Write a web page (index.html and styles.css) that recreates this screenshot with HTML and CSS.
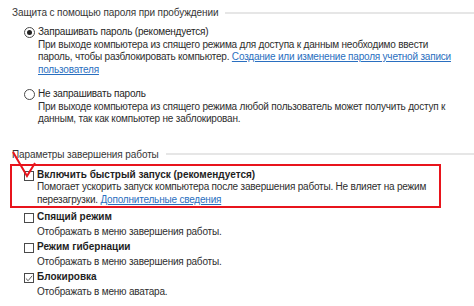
FILE: index.html
```html
<!DOCTYPE html>
<html lang="ru">

<head>
    <meta charset="UTF-8">
    <title>Параметры электропитания</title>
    <link rel="stylesheet" href="styles.css">
</head>

<body>
    <div class="panel">
        <div class="group">
            <div class="group-title">Защита с помощью пароля при пробуждении</div>

            <div class="option">
                <span class="radio checked"></span>
                <div class="option-body">
                    <div class="label">Запрашивать пароль (рекомендуется)</div>
                    <div class="desc">При выходе компьютера из спящего режима для доступа к данным необходимо ввести<br>
                        пароль, чтобы разблокировать компьютер. <a href="#">Создание или изменение пароля учетной записи<br>
                        пользователя</a></div>
                </div>
            </div>

            <div class="option option-gap">
                <span class="radio"></span>
                <div class="option-body">
                    <div class="label">Не запрашивать пароль</div>
                    <div class="desc">При выходе компьютера из спящего режима любой пользователь может получить доступ к<br>
                        данным, так как компьютер не заблокирован.</div>
                </div>
            </div>
        </div>

        <div class="group group-shutdown">
            <div class="group-title">Параметры завершения работы</div>

            <div class="highlight">
                <svg class="mark" width="26" height="30" viewBox="0 0 26 30">
                    <path d="M1 1 L15 25 L23 12" fill="none" stroke="#e8141c" stroke-width="2" />
                </svg>
                <div class="option">
                    <span class="box"></span>
                    <div class="option-body">
                        <div class="label bold">Включить быстрый запуск (рекомендуется)</div>
                        <div class="desc">Помогает ускорить запуск компьютера после завершения работы. Не влияет на режим<br>
                            перезагрузки. <a href="#">Дополнительные сведения</a></div>
                    </div>
                </div>
            </div>

            <div class="option check-item first-item">
                <span class="box"></span>
                <div class="option-body">
                    <div class="label bold">Спящий режим</div>
                    <div class="desc">Отображать в меню завершения работы.</div>
                </div>
            </div>

            <div class="option check-item">
                <span class="box"></span>
                <div class="option-body">
                    <div class="label bold">Режим гибернации</div>
                    <div class="desc">Отображать в меню завершения работы.</div>
                </div>
            </div>

            <div class="option check-item">
                <span class="box">
                    <svg width="9" height="9" viewBox="0 0 9 9">
                        <path d="M1 4.5 L3.5 7 L8 1.5" fill="none" stroke="#444" stroke-width="1" />
                    </svg>
                </span>
                <div class="option-body">
                    <div class="label bold">Блокировка</div>
                    <div class="desc">Отображать в меню аватара.</div>
                </div>
            </div>
        </div>
    </div>
</body>

</html>
```

FILE: styles.css
```css
body {
    margin: 0;
    background: #fff;
    font-family: 'Liberation Sans', Arial, sans-serif;
    font-size: 10px;
    letter-spacing: -0.2px;
    color: #2e2e2e;
}

.panel {
    padding: 6px 0 0 12px;
}

.group-title {
    display: flex;
    align-items: center;
    gap: 7px;
    line-height: 13px;
    letter-spacing: -0.1px;
    color: #363636;
}

.group-title::after {
    content: "";
    flex: 1;
    height: 2px;
    background: #e6e6e6;
}

.option {
    display: flex;
    align-items: flex-start;
    gap: 3px;
    margin-left: 12px;
    margin-top: 7px;
    line-height: 12.5px;
}

.option-gap {
    margin-top: 12px;
}

.option-body {
    white-space: nowrap;
}

.label {
    color: #262626;
}

.bold {
    font-weight: bold;
    letter-spacing: 0;
    color: #1e1e1e;
}

.desc a {
    color: #2a6fc0;
}

.radio {
    flex: none;
    box-sizing: border-box;
    width: 11px;
    height: 11px;
    margin-top: 1px;
    border: 1px solid #4a4a4a;
    border-radius: 50%;
    display: flex;
    align-items: center;
    justify-content: center;
}

.radio.checked::after {
    content: "";
    width: 5px;
    height: 5px;
    border-radius: 50%;
    background: #222;
}

.box {
    flex: none;
    box-sizing: border-box;
    width: 10px;
    height: 10px;
    margin-top: 2px;
    border: 1px solid #4a4a4a;
    display: flex;
    align-items: center;
    justify-content: center;
}

.group-shutdown {
    margin-top: 22px;
}

.highlight {
    position: relative;
    width: 427px;
    margin: 3px 0 0 -2px;
    border: 2px solid #e8141c;
    padding-top: 3px;
}

.highlight .option {
    margin-top: 0;
}

.mark {
    position: absolute;
    left: 0;
    top: -15px;
}

.check-item {
    margin-top: 2.5px;
}

.first-item {
    margin-top: 3px;
}

.check-item .desc {
    margin-top: 2.5px;
}
```
